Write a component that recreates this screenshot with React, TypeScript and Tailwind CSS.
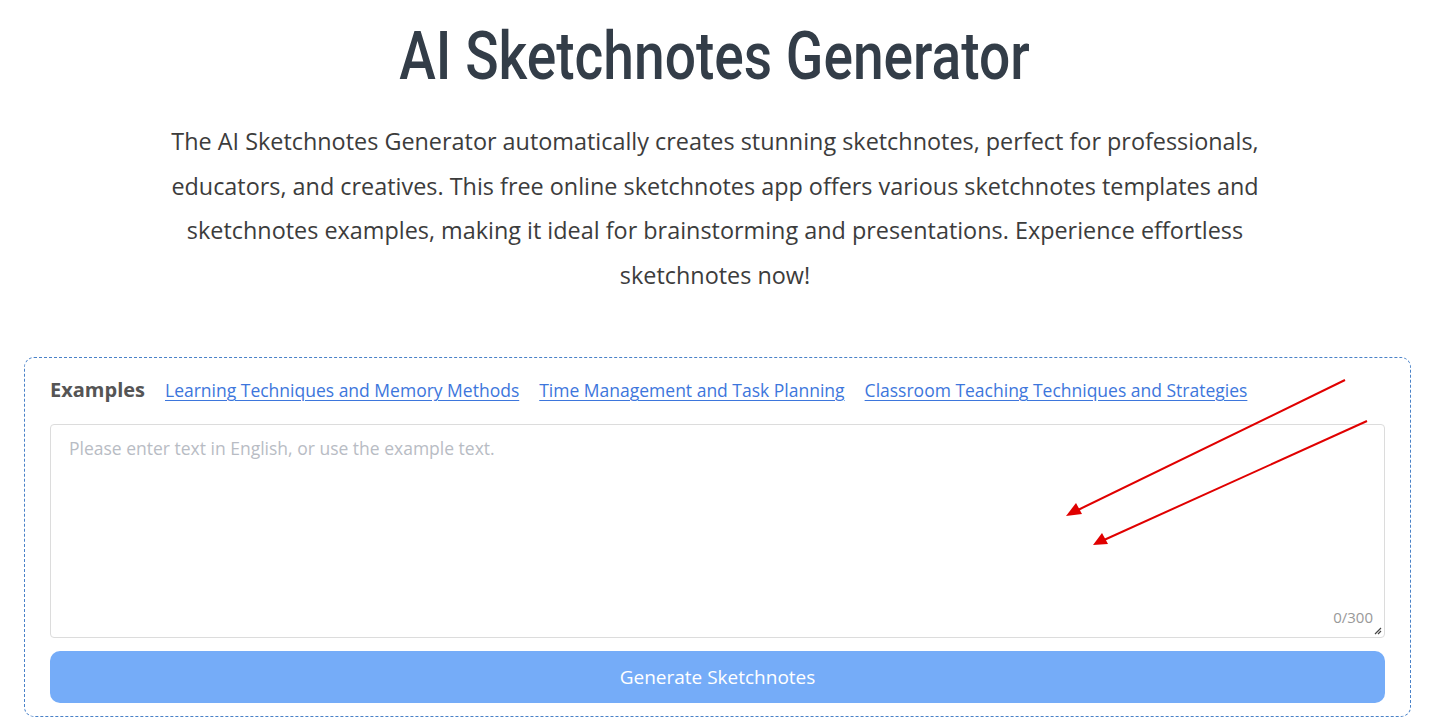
import React from "react";

export default function App() {
  const links = [
    "Learning Techniques and Memory Methods",
    "Time Management and Task Planning",
    "Classroom Teaching Techniques and Strategies",
  ];
  return (
    <div className="min-h-[724px] w-full bg-white" style={{ fontFamily: '"Open Sans", "Noto Sans", sans-serif' }}>
      <div className="flex justify-center pt-[17px]">
        <h1
          className="inline-block scale-x-[0.835] whitespace-nowrap text-center text-[66px] font-medium leading-[80px] text-[#333d48]"
          style={{ fontFamily: 'Roboto, "Liberation Sans", sans-serif' }}
        >
          AI Sketchnotes Generator
        </h1>
      </div>
      <p className="mx-auto mt-[22px] w-[1110px] text-center text-[23.4px] leading-[44.6px] text-[#3c3c3c]">
        The AI Sketchnotes Generator automatically creates stunning sketchnotes, perfect for professionals, educators, and creatives. This free online sketchnotes app offers various sketchnotes templates and sketchnotes examples, making it ideal for brainstorming and presentations. Experience effortless sketchnotes now!
      </p>
      <div className="relative ml-[24px] mr-[19px] mt-[60px] rounded-[10px] border border-dashed border-[#4a82c8] px-[25px] pb-[13px] pt-[18px]">
        <div className="flex items-center gap-[20px] pb-[20px]">
          <span className="text-[20px] font-bold leading-[28px] text-[#555]">Examples</span>
          {links.map((l) => (
            <a key={l} href="#" className="text-[17.5px] leading-[28px] text-[#3d76dc] underline underline-offset-[3px]">
              {l}
            </a>
          ))}
        </div>
        <div className="relative h-[214px] rounded-[4px] border border-[#dcdcdc]">
          <div className="px-[18px] pt-[10px] text-[17.5px] leading-[26px] text-[#b8bcc4]">
            Please enter text in English, or use the example text.
          </div>
          <span className="absolute bottom-[9px] right-[11px] text-[15px] text-[#999]">0/300</span>
          <svg className="absolute bottom-[2px] right-[2px]" width="9" height="9" viewBox="0 0 9 9">
            <path d="M8 2 L2 8 M8 5 L5 8" stroke="#444" strokeWidth="1.2" />
          </svg>
        </div>
        <button className="mt-[13px] flex h-[52px] w-full items-center justify-center rounded-[10px] bg-[#75acf8] text-[19px] text-white">
          Generate Sketchnotes
        </button>
      </div>
      <svg className="pointer-events-none absolute left-0 top-0" width="1430" height="724">
        <line x1="1345" y1="380" x2="1078" y2="510" stroke="#e00000" strokeWidth="2" />
        <polygon points="1066,516 1076,503 1082,514" fill="#e00000" />
        <line x1="1367" y1="421" x2="1104" y2="540" stroke="#e00000" strokeWidth="2" />
        <polygon points="1093,545 1102,533 1108,544" fill="#e00000" />
      </svg>
    </div>
  );
}
